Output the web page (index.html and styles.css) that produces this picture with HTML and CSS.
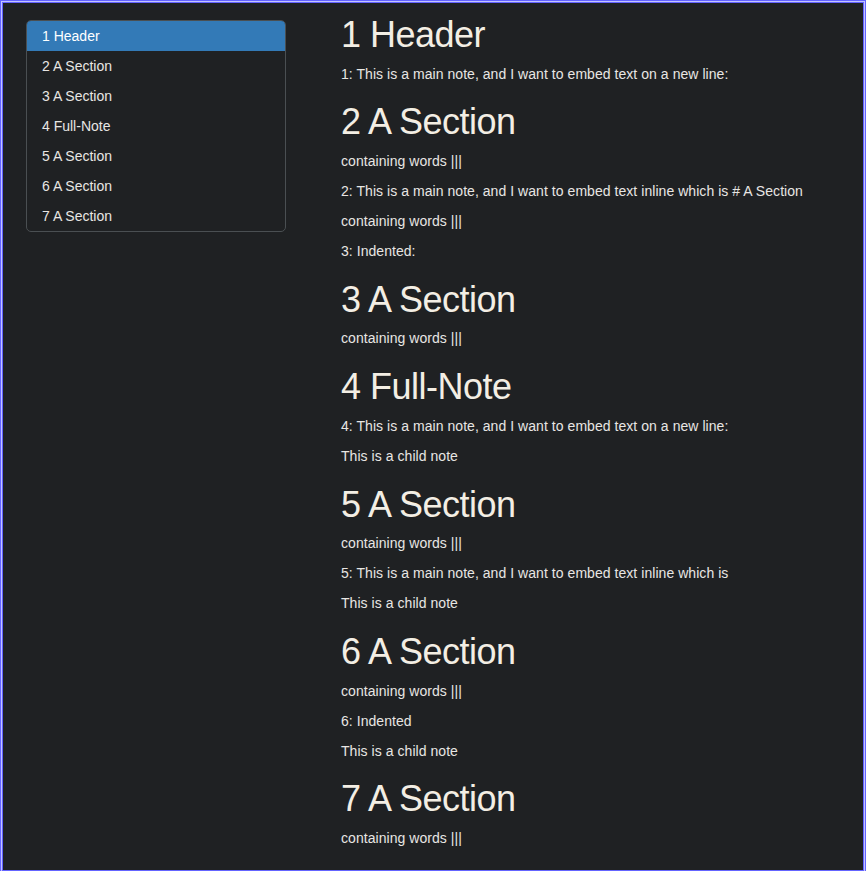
FILE: index.html
```html
<!DOCTYPE html>
<html lang="en">
<head>
<meta charset="utf-8">
<title>Notes</title>
<link rel="stylesheet" href="styles.css">
</head>
<body>
<div class="frame">
  <div class="layout">
    <nav class="sidebar">
      <ul class="list-group">
        <li class="list-item active">1 Header</li>
        <li class="list-item">2 A Section</li>
        <li class="list-item">3 A Section</li>
        <li class="list-item">4 Full-Note</li>
        <li class="list-item">5 A Section</li>
        <li class="list-item">6 A Section</li>
        <li class="list-item">7 A Section</li>
      </ul>
    </nav>
    <main class="content">
      <h1>1 Header</h1>
      <p>1: This is a main note, and I want to embed text on a new line:</p>
      <h1>2 A Section</h1>
      <p>containing words |||</p>
      <p>2: This is a main note, and I want to embed text inline which is # A Section</p>
      <p>containing words |||</p>
      <p>3: Indented:</p>
      <h1>3 A Section</h1>
      <p>containing words |||</p>
      <h1>4 Full-Note</h1>
      <p>4: This is a main note, and I want to embed text on a new line:</p>
      <p>This is a child note</p>
      <h1>5 A Section</h1>
      <p>containing words |||</p>
      <p>5: This is a main note, and I want to embed text inline which is</p>
      <p>This is a child note</p>
      <h1>6 A Section</h1>
      <p>containing words |||</p>
      <p>6: Indented</p>
      <p>This is a child note</p>
      <h1>7 A Section</h1>
      <p>containing words |||</p>
    </main>
  </div>
</div>
</body>
</html>
```

FILE: styles.css
```css
html, body {
  margin: 0;
  padding: 0;
  background: #1f2123;
}

body {
  font-family: "Liberation Sans", Arial, sans-serif;
  font-size: 14px;
  line-height: 20px;
  color: #e8e6e3;
}

.frame {
  box-sizing: border-box;
  min-height: 871px;
  border: 1px solid #6464ff;
  box-shadow: inset 0 0 0 1px #c4c4ff, inset 0 0 0 2px #6464ff;
  overflow: hidden;
}

.layout {
  display: flex;
  align-items: flex-start;
  padding-left: 25px;
}

.sidebar {
  flex: 0 0 260px;
  margin-top: 19px;
}

.list-group {
  list-style: none;
  margin: 0;
  padding: 0;
  border: 1px solid #4a4f52;
  border-radius: 5px;
  overflow: hidden;
}

.list-item {
  padding: 5px 15px;
  height: 20px;
  color: #e8e6e3;
}

.list-item.active {
  background: #337ab7;
  color: #ffffff;
}

.content {
  flex: 1;
  margin-left: 55px;
  padding-bottom: 14px;
}

.content h1 {
  font-size: 36px;
  font-weight: 400;
  line-height: 1.1;
  letter-spacing: -0.5px;
  margin: 18.8px 0 9px;
  color: #f3eee4;
}

.content h1:first-child {
  margin-top: 14px;
}

.content p {
  margin: 0 0 10px;
  letter-spacing: 0.05px;
}
```
